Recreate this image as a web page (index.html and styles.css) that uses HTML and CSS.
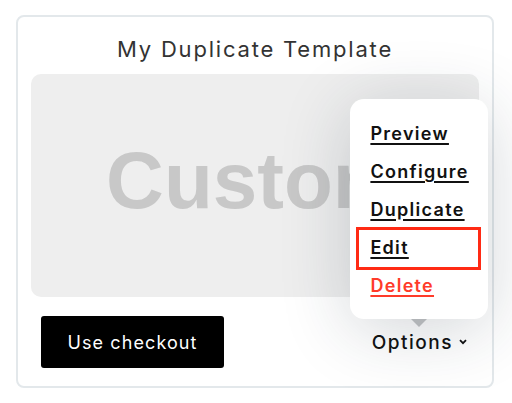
FILE: index.html
```html
<!DOCTYPE html>
<html>
<head>
<meta charset="utf-8">
<link rel="stylesheet" href="styles.css">
</head>
<body>
<div class="card">
  <div class="title">My Duplicate Template</div>
  <div class="preview"><span class="preview-text">Custom</span></div>
  <div class="footer">
    <button class="checkout">Use checkout</button>
    <div class="options">
      <span class="options-label">Options</span>
      <svg class="chev" width="8" height="6" viewBox="0 0 8 6"><path d="M1 1.2 L4 4.2 L7 1.2" fill="none" stroke="#111" stroke-width="1.8"/></svg>
      <div class="menu">
        <a class="item">Preview</a>
        <a class="item">Configure</a>
        <a class="item">Duplicate</a>
        <a class="item">Edit</a>
        <a class="item danger">Delete</a>
        <div class="highlight"></div>
        <div class="arrow"></div>
      </div>
    </div>
  </div>
</div>
</body>
</html>
```
FILE: styles.css
```css
body {
  margin: 0;
  background: #fff;
  font-family: Inter, "DejaVu Sans", sans-serif;
}
.card {
  box-sizing: border-box;
  width: 478px;
  height: 373px;
  margin: 15px 0 0 16px;
  border: 2px solid #e3e8eb;
  border-radius: 8px;
  padding: 0 13px;
  display: flex;
  flex-direction: column;
}
.title {
  height: 50px;
  padding-top: 7px;
  display: flex;
  align-items: center;
  justify-content: center;
  font-size: 22px;
  letter-spacing: 1.8px;
  color: #333;
}
.preview {
  height: 223px;
  background: #eeeeee;
  border-radius: 10px;
  display: flex;
  align-items: center;
  justify-content: center;
  overflow: hidden;
  padding-bottom: 9px;
  box-sizing: border-box;
}
.preview-text {
  font-family: "Liberation Sans", Arial, sans-serif;
  font-weight: bold;
  font-size: 80px;
  color: #c8c8c8;
}
.footer {
  margin-top: 19px;
  padding: 0 12px 0 10px;
  display: flex;
  justify-content: space-between;
  align-items: center;
}
.checkout {
  width: 183px;
  height: 52px;
  background: #000;
  color: #fff;
  border: none;
  border-radius: 3px;
  font-family: inherit;
  font-size: 18px;
  font-weight: 400;
  letter-spacing: 1.1px;
}
.options {
  position: relative;
  display: flex;
  align-items: center;
  gap: 6px;
  height: 24px;
  font-size: 19px;
  font-weight: 500;
  letter-spacing: 1.5px;
  color: #111;
}
.menu {
  position: absolute;
  bottom: calc(100% + 11px);
  left: 50%;
  transform: translateX(-50%);
  width: 138px;
  box-sizing: border-box;
  padding: 16px 0 14px 20px;
  background: #fff;
  border-radius: 14px;
  box-shadow: 0 10px 70px rgba(30, 45, 60, 0.2);
  display: flex;
  flex-direction: column;
  letter-spacing: 1.3px;
}
.item {
  line-height: 38px;
  font-size: 18px;
  font-weight: 600;
  color: #111;
  text-decoration: underline;
  text-decoration-thickness: 1.5px;
  text-underline-offset: 3px;
}
.item.danger {
  color: #ff3b2a;
}
.highlight {
  position: absolute;
  left: 6px;
  top: 128px;
  width: 125px;
  height: 43px;
  box-sizing: border-box;
  border: 3px solid #ff2a14;
}
.arrow {
  position: absolute;
  top: 100%;
  left: 50%;
  margin-left: -8px;
  border-left: 8px solid transparent;
  border-right: 8px solid transparent;
  border-top: 8px solid #b1b4b7;
}
```
